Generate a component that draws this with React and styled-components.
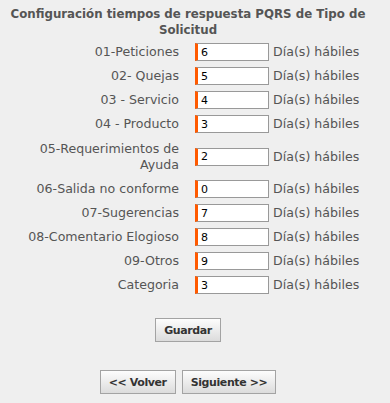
import React from 'react'
import styled, { createGlobalStyle } from 'styled-components'

const GlobalStyle = createGlobalStyle`
  html, body {
    margin: 0;
    padding: 0;
    background: #efefef;
  }
  body {
    font-family: Tahoma, "DejaVu Sans", Verdana, sans-serif;
    color: #555;
  }
`

const rows = [
  { label: '01-Peticiones', value: '6' },
  { label: '02- Quejas', value: '5' },
  { label: '03 - Servicio', value: '4' },
  { label: '04 - Producto', value: '3' },
  { label: '05-Requerimientos de\nAyuda', value: '2', tall: true },
  { label: '06-Salida no conforme', value: '0' },
  { label: '07-Sugerencias', value: '7' },
  { label: '08-Comentario Elogioso', value: '8' },
  { label: '09-Otros', value: '9' },
  { label: 'Categoria', value: '3' },
]

const App = () => (
  <>
    <GlobalStyle />
    <Page>
      <Title>Configuración tiempos de respuesta PQRS de Tipo de Solicitud</Title>
      <Form>
        {rows.map((row) => (
          <React.Fragment key={row.label}>
            <Label $tall={row.tall}>{row.label}</Label>
            <Field defaultValue={row.value} />
            <Unit>Día(s) hábiles</Unit>
          </React.Fragment>
        ))}
      </Form>
      <Actions>
        <Button>Guardar</Button>
      </Actions>
      <Nav>
        <Button>&lt;&lt; Volver</Button>
        <Button>Siguiente &gt;&gt;</Button>
      </Nav>
    </Page>
  </>
)

const Page = styled.div`
  width: 376px;
  padding-top: 6px;
  text-align: center;
`

const Title = styled.h1`
  margin: 0 auto 5px;
  width: 370px;
  font-size: 11.8px;
  line-height: 16px;
  font-weight: bold;
  color: #555;
`

const Form = styled.div`
  display: grid;
  grid-template-columns: 172px 74px auto;
  row-gap: 6px;
  align-items: center;
  padding-left: 23px;
  text-align: left;
`

const Label = styled.div`
  font-size: 12.6px;
  line-height: 16px;
  text-align: right;
  white-space: pre-line;
  padding: ${({ $tall }) => ($tall ? '2px 16px 1px 0' : '0 16px 0 0')};
  color: #555;
`

const Field = styled.input`
  box-sizing: border-box;
  width: 74px;
  height: 18px;
  margin: 0;
  padding: 0 0 0 3px;
  border: 1px solid #999;
  border-left: 3px solid #ff5a00;
  background: #fff;
  font-family: Tahoma, "DejaVu Sans", Verdana, sans-serif;
  font-size: 11px;
  color: #000;
  outline: none;
`

const Unit = styled.div`
  font-size: 12.6px;
  line-height: 16px;
  padding-left: 4px;
  color: #555;
`

const Actions = styled.div`
  margin-top: 24px;
`

const Nav = styled.div`
  display: flex;
  justify-content: center;
  gap: 6px;
  margin-top: 28px;
`

const Button = styled.button`
  height: 24px;
  padding: 0 8px;
  border: 1px solid #a3a3a3;
  background: linear-gradient(#fdfdfd, #dcdcdc);
  font-family: Tahoma, "DejaVu Sans", Verdana, sans-serif;
  font-size: 11px;
  font-weight: bold;
  letter-spacing: -0.4px;
  color: #333;
  cursor: pointer;
`

export default App
